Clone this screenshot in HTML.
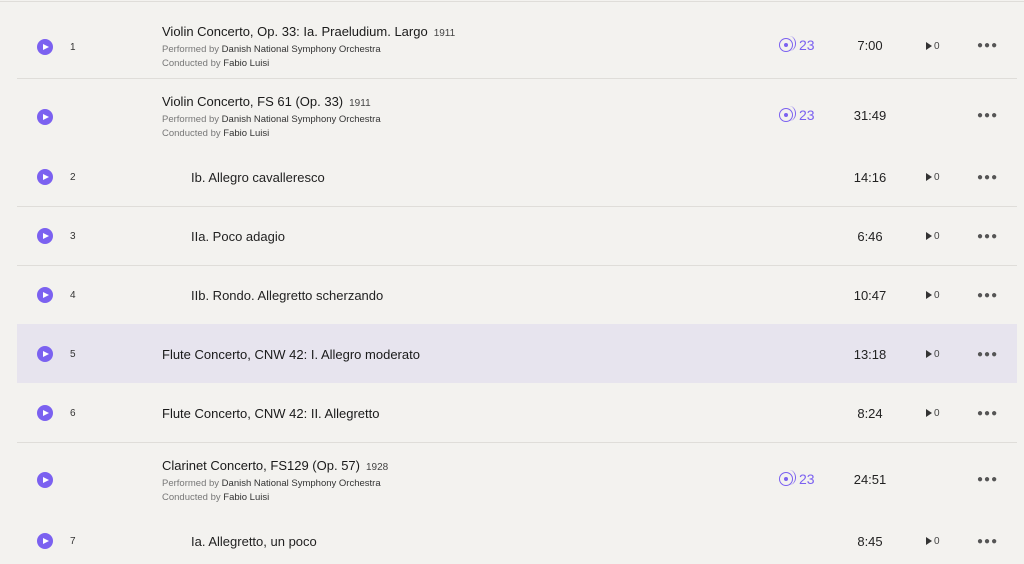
<!DOCTYPE html>
<html><head><style>
body{margin:0;width:1024px;height:564px;background:#f3f2ef;font-family:"Liberation Sans",sans-serif;position:relative;overflow:hidden;color:#1d1d1d}
.a{position:absolute}
.hl{left:17px;width:1000px;top:324px;height:59px;background:#e7e4ee}
.div{left:17px;width:1000px;height:1px;background:#dfddd9}
.play{left:37px;width:16px;height:16px;border-radius:50%;background:#7b61f0}
.play:after{content:"";position:absolute;left:6px;top:4.5px;border-left:6px solid #fff;border-top:3.5px solid transparent;border-bottom:3.5px solid transparent}
.num{left:70px;font-size:10px;color:#333}
.t{left:162px;font-size:13px;color:#1a1a1a;white-space:nowrap}
.t small{font-size:10px;color:#444;margin-left:6px}
.s{left:162px;font-size:9.5px;color:#777;white-space:nowrap;line-height:14px}
.s b{font-weight:normal;color:#333}
.sub{left:191px;font-size:13px;color:#222;white-space:nowrap}
.dur{left:830px;width:80px;text-align:center;font-size:13px;color:#222}
.pc{left:926px;font-size:10px;color:#444}
.pc:before{content:"";display:inline-block;border-left:6px solid #333;border-top:4px solid transparent;border-bottom:4px solid transparent;margin-right:2px;vertical-align:-1px}
.dots{left:977px;font-size:10px;color:#555;letter-spacing:1px}
.mv{left:779px;font-size:14px;color:#7b61f0;white-space:nowrap}
.mv i{display:inline-block;width:12px;height:12px;border:1.5px solid #7b61f0;border-radius:50%;position:relative;vertical-align:-2px;margin-right:6px}
.mv i:after{content:"";position:absolute;left:4px;top:4px;width:4px;height:4px;border-radius:50%;background:#7b61f0}
.mv i:before{content:"";position:absolute;left:3px;top:-3px;width:12px;height:15px;border-radius:50%;border-right:1.5px solid #7b61f0}
</style></head><body>
<div class="a" style="left:0;top:1px;width:1024px;height:1px;background:#dfddd9"></div>
<div class="a hl"></div>
<div class="a div" style="top:78px"></div>
<div class="a div" style="top:206px"></div>
<div class="a div" style="top:265px"></div>
<div class="a div" style="top:442px"></div>

<div class="a play" style="top:39px"></div>
<div class="a num" style="top:42px">1</div>
<div class="a t" style="top:24px">Violin Concerto, Op. 33: Ia. Praeludium. Largo<small>1911</small></div>
<div class="a s" style="top:43px">Performed by <b>Danish National Symphony Orchestra</b><br>Conducted by <b>Fabio Luisi</b></div>
<div class="a mv" style="top:37px"><i></i>23</div>
<div class="a dur" style="top:38px">7:00</div>
<div class="a pc" style="top:41px">0</div>
<div class="a dots" style="top:40px">●●●</div>

<div class="a play" style="top:109px"></div>
<div class="a t" style="top:94px">Violin Concerto, FS 61 (Op. 33)<small>1911</small></div>
<div class="a s" style="top:113px">Performed by <b>Danish National Symphony Orchestra</b><br>Conducted by <b>Fabio Luisi</b></div>
<div class="a mv" style="top:107px"><i></i>23</div>
<div class="a dur" style="top:108px">31:49</div>
<div class="a dots" style="top:110px">●●●</div>

<div class="a play" style="top:169px"></div>
<div class="a num" style="top:172px">2</div>
<div class="a sub" style="top:170px">Ib. Allegro cavalleresco</div>
<div class="a dur" style="top:170px">14:16</div>
<div class="a pc" style="top:172px">0</div>
<div class="a dots" style="top:172px">●●●</div>

<div class="a play" style="top:228px"></div>
<div class="a num" style="top:231px">3</div>
<div class="a sub" style="top:229px">IIa. Poco adagio</div>
<div class="a dur" style="top:229px">6:46</div>
<div class="a pc" style="top:231px">0</div>
<div class="a dots" style="top:231px">●●●</div>

<div class="a play" style="top:287px"></div>
<div class="a num" style="top:290px">4</div>
<div class="a sub" style="top:288px">IIb. Rondo. Allegretto scherzando</div>
<div class="a dur" style="top:288px">10:47</div>
<div class="a pc" style="top:290px">0</div>
<div class="a dots" style="top:290px">●●●</div>

<div class="a play" style="top:346px"></div>
<div class="a num" style="top:349px">5</div>
<div class="a t" style="top:347px">Flute Concerto, CNW 42: I. Allegro moderato</div>
<div class="a dur" style="top:347px">13:18</div>
<div class="a pc" style="top:349px">0</div>
<div class="a dots" style="top:349px">●●●</div>

<div class="a play" style="top:405px"></div>
<div class="a num" style="top:408px">6</div>
<div class="a t" style="top:406px">Flute Concerto, CNW 42: II. Allegretto</div>
<div class="a dur" style="top:406px">8:24</div>
<div class="a pc" style="top:408px">0</div>
<div class="a dots" style="top:408px">●●●</div>

<div class="a play" style="top:472px"></div>
<div class="a t" style="top:458px">Clarinet Concerto, FS129 (Op. 57)<small>1928</small></div>
<div class="a s" style="top:477px">Performed by <b>Danish National Symphony Orchestra</b><br>Conducted by <b>Fabio Luisi</b></div>
<div class="a mv" style="top:471px"><i></i>23</div>
<div class="a dur" style="top:472px">24:51</div>
<div class="a dots" style="top:474px">●●●</div>

<div class="a play" style="top:533px"></div>
<div class="a num" style="top:536px">7</div>
<div class="a sub" style="top:534px">Ia. Allegretto, un poco</div>
<div class="a dur" style="top:534px">8:45</div>
<div class="a pc" style="top:536px">0</div>
<div class="a dots" style="top:536px">●●●</div>
</body></html>
